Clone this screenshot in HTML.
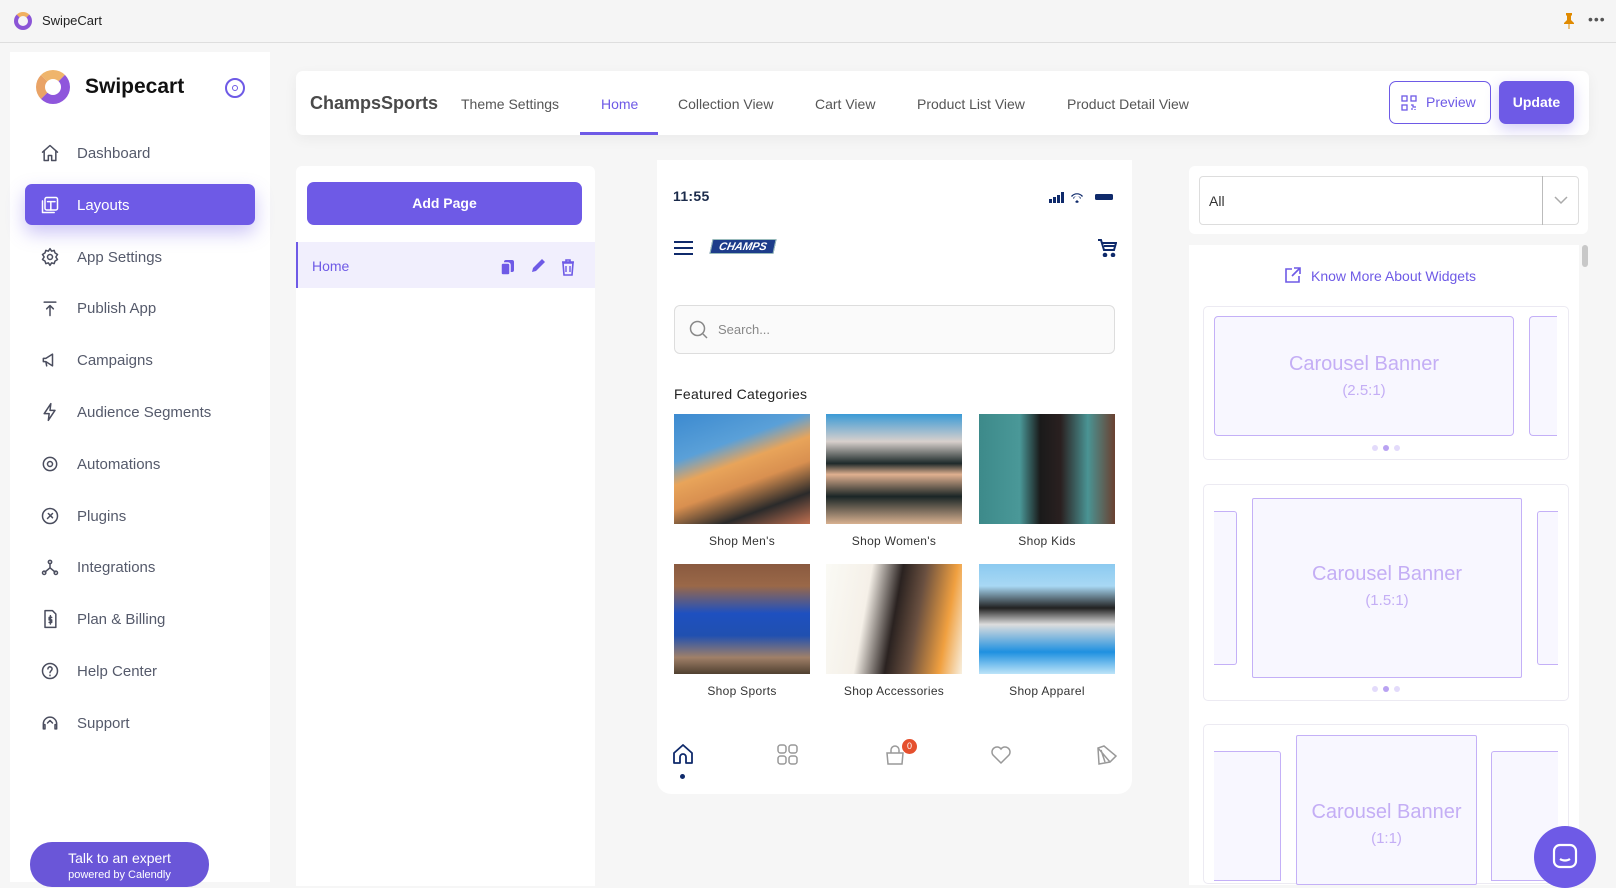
<!DOCTYPE html>
<html><head><meta charset="utf-8"><style>
*{box-sizing:border-box;margin:0;padding:0}
body{width:1616px;height:873px;overflow:hidden;background:#f6f6f6;font-family:"Liberation Sans",sans-serif;position:relative;color:#444}
.a{position:absolute}
.nav{position:absolute;left:40px;font-size:15px;color:#555a6b;display:flex;align-items:center}
.nav svg{width:20px;height:20px;margin-right:17px;fill:none;stroke:#4a4d5e;stroke-width:1.8;stroke-linecap:round;stroke-linejoin:round}
.tab{position:absolute;top:96px;font-size:14px;color:#555}
.img{position:absolute;width:136px;height:110px}
.lbl{position:absolute;width:136px;text-align:center;font-size:12px;color:#333;letter-spacing:.3px}
.ban{position:absolute;border:1.5px solid #c4b0f7;background:#f8f7ff;border-radius:4px;color:#c4aef5;text-align:center}
.card{position:absolute;background:#fff;border:1px solid #eceaf2;border-radius:5px}
.dots{position:absolute;display:flex;gap:5px}
.dots i{width:6px;height:6px;border-radius:50%;background:#e3dbfb}
.dots i.o{background:#b9a2f2}
</style></head><body>
<div class="a" style="left:0;top:0;width:1616px;height:43px;background:#f5f5f5;border-bottom:1px solid #dedede"></div>
<div class="a" style="left:14px;top:12px;width:18px;height:18px;border-radius:50%;border:4px solid #8b55d6;border-top-color:#f0b060"></div>
<div class="a" style="left:42px;top:13px;font-size:13px;color:#222">SwipeCart</div>
<svg class="a" style="left:1563px;top:13px" width="12" height="16" viewBox="0 0 12 16"><path d="M3 0h6v2l-1 1v4l3 3v1H1v-1l3-3V3L3 2z M5.5 11h1v5h-1z" fill="#e08a00"/></svg>
<div class="a" style="left:1588px;top:11px;font-size:14px;color:#555;letter-spacing:1px">•••</div>

<div class="a" style="left:10px;top:52px;width:260px;height:830px;background:#fff"></div>
<div class="a" style="left:36px;top:70px;width:34px;height:34px;border-radius:50%;border:9px solid #8f56dc;border-top-color:#efb56c;border-left-color:#e9a366"></div>
<div class="a" style="left:85px;top:75px;font-size:21px;font-weight:bold;color:#111">Swipecart</div>
<div class="a" style="left:225px;top:78px;width:20px;height:20px;border-radius:50%;border:2px solid #6e5ae6"></div>
<div class="a" style="left:232px;top:85px;width:6px;height:6px;border-radius:50%;border:1.5px solid #6e5ae6"></div>
<div class="a" style="left:25px;top:184px;width:230px;height:41px;background:#6e5ae6;border-radius:7px;box-shadow:0 8px 18px rgba(110,90,230,.35)"></div>
<div class="nav" style="top:143px"><svg viewBox="0 0 24 24"><path d="M3 11l9-8 9 8M5 9v12h5v-6h4v6h5V9"/></svg>Dashboard</div>
<div class="nav" style="top:195px;color:#fff"><svg viewBox="0 0 24 24" style="stroke:#fff"><rect x="6" y="3" width="15" height="15" rx="2"/><path d="M3 7v14h14M9 8h9M13 8v10"/></svg>Layouts</div>
<div class="nav" style="top:247px"><svg viewBox="0 0 24 24"><circle cx="12" cy="12" r="3"/><path d="M12 2l2 3 3-1 1 3 3 2-2 3 2 3-3 2-1 3-3-1-2 3-2-3-3 1-1-3-3-2 2-3-2-3 3-2 1-3 3 1z"/></svg>App Settings</div>
<div class="nav" style="top:298px"><svg viewBox="0 0 24 24"><path d="M5 5h14M12 21V10M8 13l4-4 4 4"/></svg>Publish App</div>
<div class="nav" style="top:350px"><svg viewBox="0 0 24 24"><path d="M4 10v4h3l8 5V5L7 10zM7 14l1 5"/></svg>Campaigns</div>
<div class="nav" style="top:402px"><svg viewBox="0 0 24 24"><path d="M13 2L5 14h6l-1 8 8-12h-6z"/></svg>Audience Segments</div>
<div class="nav" style="top:454px"><svg viewBox="0 0 24 24"><circle cx="12" cy="12" r="3"/><path d="M4 12a8 8 0 0116 0M20 12a8 8 0 01-16 0"/></svg>Automations</div>
<div class="nav" style="top:506px"><svg viewBox="0 0 24 24"><circle cx="12" cy="12" r="9"/><path d="M9 15l6-6M10 9l5 5"/></svg>Plugins</div>
<div class="nav" style="top:557px"><svg viewBox="0 0 24 24"><circle cx="12" cy="6" r="2"/><circle cx="5" cy="19" r="2"/><circle cx="19" cy="19" r="2"/><path d="M12 8v5l-6 5M12 13l6 5"/></svg>Integrations</div>
<div class="nav" style="top:609px"><svg viewBox="0 0 24 24"><path d="M6 2h9l4 4v16H6z"/><path d="M14 10h-3v3h3v3h-3M12.5 8v10"/></svg>Plan &amp; Billing</div>
<div class="nav" style="top:661px"><svg viewBox="0 0 24 24"><circle cx="12" cy="12" r="9"/><path d="M9.5 9.5a2.5 2.5 0 114 2c-1 .7-1.5 1.2-1.5 2.5M12 17v.5"/></svg>Help Center</div>
<div class="nav" style="top:713px"><svg viewBox="0 0 24 24"><path d="M4 16v-3a8 8 0 0116 0v3M4 14h2v5H4zM18 14h2v5h-2zM9 12l3-3 3 3"/></svg>Support</div>
<div class="a" style="left:30px;top:842px;width:179px;height:45px;background:#6a56d8;border-radius:22px;color:#fff;text-align:center;font-size:14px;padding-top:9px;line-height:15px">Talk to an expert<br><span style="font-size:11px">powered by Calendly</span></div>

<div class="a" style="left:296px;top:71px;width:1293px;height:64px;background:#fff;border-radius:7px;box-shadow:0 4px 14px rgba(0,0,0,.05)"></div>
<div class="a" style="left:310px;top:93px;font-size:18px;font-weight:bold;color:#4a4a4a">ChampsSports</div>
<div class="tab" style="left:461px">Theme Settings</div>
<div class="tab" style="left:601px;color:#6e5ae6">Home</div>
<div class="a" style="left:580px;top:132px;width:78px;height:3px;background:#6e5ae6"></div>
<div class="tab" style="left:678px">Collection View</div>
<div class="tab" style="left:815px">Cart View</div>
<div class="tab" style="left:917px">Product List View</div>
<div class="tab" style="left:1067px">Product Detail View</div>
<div class="a" style="left:1389px;top:81px;width:102px;height:43px;border:1.5px solid #6e5ae6;border-radius:7px;color:#6e5ae6;font-size:14px;padding:12px 0 0 36px">Preview</div>
<svg class="a" style="left:1401px;top:95px" width="16" height="16" viewBox="0 0 16 16" fill="none" stroke="#6e5ae6" stroke-width="1.3"><rect x="1" y="1" width="5" height="5"/><rect x="10" y="1" width="5" height="5"/><rect x="1" y="10" width="5" height="5"/><path d="M10 10h2v2h3M10 14h2M14 14v1"/></svg>
<div class="a" style="left:1499px;top:81px;width:75px;height:43px;background:#6e5ae6;border-radius:7px;color:#fff;font-size:14px;font-weight:bold;text-align:center;line-height:43px;box-shadow:0 5px 14px rgba(110,90,230,.3)">Update</div>

<div class="a" style="left:296px;top:166px;width:299px;height:720px;background:#fff;border-radius:6px 6px 0 0"></div>
<div class="a" style="left:307px;top:182px;width:275px;height:43px;background:#6e5ae6;border-radius:7px;color:#fff;font-weight:bold;font-size:14px;text-align:center;line-height:43px">Add Page</div>
<div class="a" style="left:296px;top:242px;width:299px;height:46px;background:#f1effd;border-left:2.5px solid #6e5ae6"></div>
<div class="a" style="left:312px;top:258px;font-size:14px;color:#6e5ae6">Home</div>
<svg class="a" style="left:500px;top:258px" width="76" height="18" viewBox="0 0 76 18" fill="#6e5ae6"><rect x="4" y="2" width="10" height="12" rx="2"/><rect x="1" y="5" width="9" height="12" rx="2" stroke="#f1effd" stroke-width="1.5"/><path d="M32 14l1-4 9-9 3 3-9 9z"/><path d="M62 4h12M66 4V2h4v2M63 5h10l-1 12h-8z" fill="none" stroke="#6e5ae6" stroke-width="1.6"/><path d="M66 8v6M70 8v6" stroke="#6e5ae6" stroke-width="1.4"/></svg>

<div class="a" style="left:657px;top:160px;width:475px;height:634px;background:#fff;border-radius:0 0 14px 14px"></div>
<div class="a" style="left:673px;top:188px;font-size:14px;color:#1a2a4a;font-weight:bold;letter-spacing:.3px">11:55</div>
<svg class="a" style="left:1049px;top:191px" width="66" height="12" viewBox="0 0 66 12" fill="#0f2a6b"><rect x="0" y="8" width="3" height="4"/><rect x="4" y="6" width="3" height="6"/><rect x="8" y="4" width="3" height="8"/><rect x="12" y="1" width="3" height="11"/><path d="M22 5a8 8 0 0112 0l-1 1a6 6 0 00-10 0zM24 7a5 5 0 018 0l-1 1a3 3 0 00-6 0zM28 9l2 2-2 1-2-1z"/><rect x="46" y="3" width="18" height="6" rx="1.5"/></svg>
<svg class="a" style="left:674px;top:241px" width="20" height="14" viewBox="0 0 20 14" fill="#0f2a6b"><rect y="0" width="19" height="2"/><rect y="6" width="19" height="2"/><rect y="12" width="19" height="2"/></svg>
<div class="a" style="left:711px;top:239px;width:64px;height:15px;background:#1d3c8a;transform:skewX(-12deg);color:#fff;font-size:11px;font-weight:bold;font-style:italic;text-align:center;line-height:14px;border:1px solid #9bb">CHAMPS</div>
<svg class="a" style="left:1097px;top:239px" width="20" height="18" viewBox="0 0 20 18" fill="none" stroke="#0f2a6b" stroke-width="2"><path d="M1 1h3l3 10h10l2-7H5M7 7h11"/><circle cx="8" cy="16" r="1.3" fill="#0f2a6b"/><circle cx="16" cy="16" r="1.3" fill="#0f2a6b"/></svg>
<div class="a" style="left:674px;top:305px;width:441px;height:49px;border:1px solid #ddd;border-radius:6px;background:#fafafa"></div>
<svg class="a" style="left:689px;top:320px" width="20" height="20" viewBox="0 0 20 20" fill="none" stroke="#888" stroke-width="1.5"><circle cx="8.5" cy="8.5" r="7"/><path d="M14 14l4 4"/></svg>
<div class="a" style="left:718px;top:322px;font-size:13px;color:#888">Search...</div>
<div class="a" style="left:674px;top:386px;font-size:14px;color:#222;letter-spacing:.3px">Featured Categories</div>
<div class="img" style="left:674px;top:414px;background:linear-gradient(160deg,#3c8ad0 0%,#5aa0d8 30%,#e8a45a 45%,#d99050 60%,#2a2a2a 80%,#c07050 100%)"></div>
<div class="img" style="left:826px;top:414px;background:linear-gradient(180deg,#3a9ad6 0%,#d8d0cc 25%,#1e2a2a 45%,#e0b090 55%,#1a2626 75%,#d8b090 100%)"></div>
<div class="img" style="left:979px;top:414px;background:linear-gradient(90deg,#3d8a8a 0%,#4a9898 30%,#1a1a1a 45%,#2a2020 60%,#4a9494 80%,#6a4030 100%)"></div>
<div class="img" style="left:674px;top:564px;background:linear-gradient(180deg,#8a5a40 0%,#9a6848 20%,#1e50c0 45%,#2050b0 65%,#a08068 85%,#504030 100%)"></div>
<div class="img" style="left:826px;top:564px;background:linear-gradient(100deg,#fafaf5 0%,#f5f0e8 30%,#2a2220 50%,#6a5040 65%,#f0a040 85%,#f8f0e0 100%)"></div>
<div class="img" style="left:979px;top:564px;background:linear-gradient(180deg,#8ccaf0 0%,#a8d8f4 20%,#222 40%,#ddd 55%,#1e90e0 80%,#bde4f8 100%)"></div>
<div class="lbl" style="left:674px;top:534px">Shop Men's</div>
<div class="lbl" style="left:826px;top:534px">Shop Women's</div>
<div class="lbl" style="left:979px;top:534px">Shop Kids</div>
<div class="lbl" style="left:674px;top:684px">Shop Sports</div>
<div class="lbl" style="left:826px;top:684px">Shop Accessories</div>
<div class="lbl" style="left:979px;top:684px">Shop Apparel</div>
<svg class="a" style="left:672px;top:743px" width="22" height="22" viewBox="0 0 22 22" fill="none" stroke="#0f2a6b" stroke-width="1.8" stroke-linejoin="round"><path d="M2 10l9-8 9 8v10h-6v-6a3 3 0 00-6 0v6H2z"/></svg>
<div class="a" style="left:680px;top:774px;width:5px;height:5px;border-radius:50%;background:#0f2a6b"></div>
<svg class="a" style="left:777px;top:744px" width="21" height="21" viewBox="0 0 21 21" fill="none" stroke="#999" stroke-width="1.5"><rect x="1" y="1" width="8" height="8" rx="2.5"/><rect x="12" y="1" width="8" height="8" rx="2.5"/><rect x="1" y="12" width="8" height="8" rx="2.5"/><rect x="12" y="12" width="8" height="8" rx="2.5"/></svg>
<svg class="a" style="left:884px;top:744px" width="22" height="22" viewBox="0 0 22 22" fill="none" stroke="#999" stroke-width="1.5"><path d="M3 9h16l-1 11H4z"/><path d="M7 9V6a4 4 0 018 0v3"/></svg>
<div class="a" style="left:902px;top:739px;width:15px;height:15px;border-radius:50%;background:#e5502e;color:#fff;font-size:9px;text-align:center;line-height:15px">0</div>
<svg class="a" style="left:990px;top:745px" width="22" height="20" viewBox="0 0 22 20" fill="none" stroke="#999" stroke-width="1.5"><path d="M11 18L3 10a4.5 4.5 0 018-6 4.5 4.5 0 018 6z"/></svg>
<svg class="a" style="left:1096px;top:744px" width="22" height="22" viewBox="0 0 22 22" fill="none" stroke="#999" stroke-width="1.5"><path d="M3 20L2 4l6-2 12 10-6 6zM2 4l12 14M5 6l4 12"/></svg>

<div class="a" style="left:1189px;top:166px;width:399px;height:68px;background:#fff;border-radius:6px"></div>
<div class="a" style="left:1199px;top:176px;width:380px;height:49px;border:1px solid #ddd;border-radius:4px"></div>
<div class="a" style="left:1542px;top:176px;width:1px;height:49px;background:#bbb"></div>
<div class="a" style="left:1209px;top:193px;font-size:14px;color:#333">All</div>
<svg class="a" style="left:1554px;top:196px" width="14" height="9" viewBox="0 0 14 9" fill="none" stroke="#aaa" stroke-width="1.5"><path d="M1 1l6 6 6-6"/></svg>

<div class="a" style="left:1189px;top:245px;width:390px;height:640px;background:#fff"></div>
<div class="a" style="left:1582px;top:245px;width:6px;height:22px;background:#c8c8c8;border-radius:3px"></div>
<svg class="a" style="left:1284px;top:267px" width="17" height="17" viewBox="0 0 17 17" fill="none" stroke="#6e5ae6" stroke-width="1.6"><path d="M8 2H2v13h13V9M10 1h6v6M16 1L8 9"/></svg>
<div class="a" style="left:1311px;top:268px;font-size:14px;color:#6e5ae6">Know More About Widgets</div>

<div class="card" style="left:1203px;top:306px;width:366px;height:154px"></div>
<div class="ban" style="left:1214px;top:316px;width:300px;height:120px;padding-top:36px"><div style="font-size:20px">Carousel Banner</div><div style="font-size:15px;margin-top:6px">(2.5:1)</div></div>
<div class="ban" style="left:1529px;top:316px;width:28px;height:120px;border-right:none;border-radius:4px 0 0 4px"></div>
<div class="dots" style="left:1372px;top:445px"><i></i><i class="o"></i><i></i></div>

<div class="card" style="left:1203px;top:484px;width:366px;height:217px"></div>
<div class="ban" style="left:1252px;top:498px;width:270px;height:180px;padding-top:64px;border-radius:2px"><div style="font-size:20px">Carousel Banner</div><div style="font-size:15px;margin-top:6px">(1.5:1)</div></div>
<div class="ban" style="left:1214px;top:511px;width:23px;height:154px;border-left:none;border-radius:0 3px 3px 0"></div>
<div class="ban" style="left:1537px;top:511px;width:21px;height:154px;border-right:none;border-radius:3px 0 0 3px"></div>
<div class="dots" style="left:1372px;top:686px"><i></i><i class="o"></i><i></i></div>

<div class="card" style="left:1203px;top:724px;width:366px;height:160px"></div>
<div class="ban" style="left:1296px;top:735px;width:181px;height:150px;padding-top:65px;border-radius:2px"><div style="font-size:20px">Carousel Banner</div><div style="font-size:15px;margin-top:6px">(1:1)</div></div>
<div class="ban" style="left:1214px;top:751px;width:67px;height:130px;border-left:none;border-radius:0 3px 0 0"></div>
<div class="ban" style="left:1491px;top:751px;width:67px;height:130px;border-right:none;border-radius:3px 0 0 0"></div>

<div class="a" style="left:1534px;top:826px;width:62px;height:62px;border-radius:50%;background:#6e5ae6"></div>
<svg class="a" style="left:1551px;top:842px" width="28" height="28" viewBox="0 0 28 28" fill="none" stroke="#fff" stroke-width="2.2"><rect x="3" y="3" width="22" height="22" rx="6"/><path d="M9 17c3 2 7 2 10 0"/></svg>
</body></html>
